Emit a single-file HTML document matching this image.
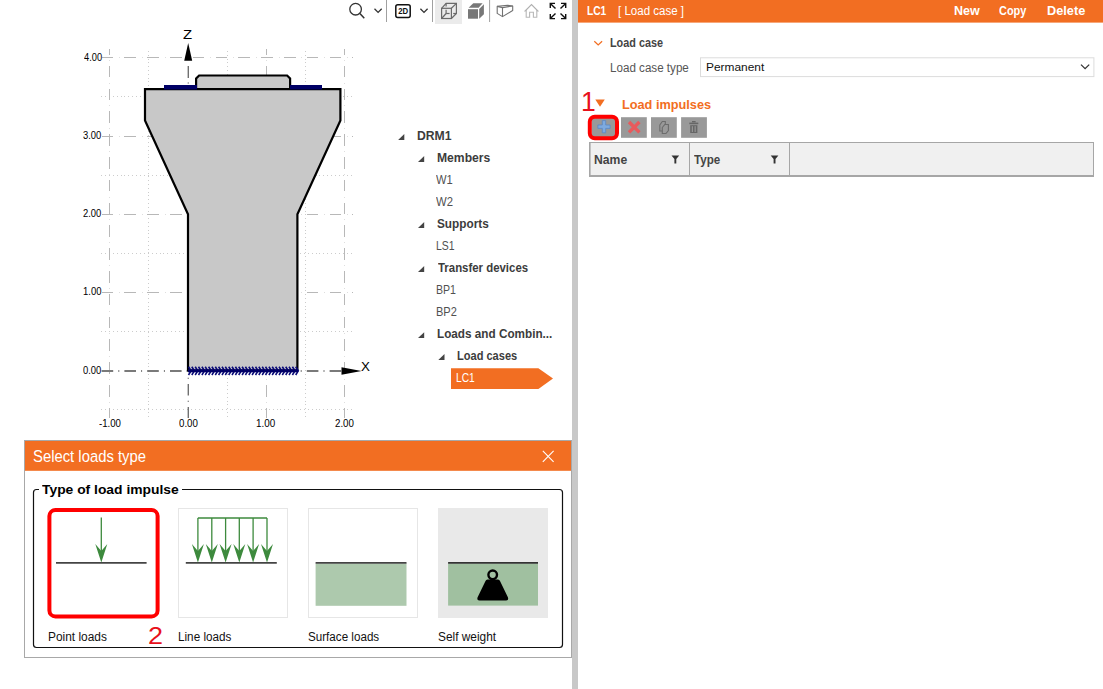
<!DOCTYPE html>
<html><head><meta charset="utf-8"><style>
html,body{margin:0;padding:0;background:#fff;}
body{width:1103px;height:689px;position:relative;overflow:hidden;font-family:'Liberation Sans',sans-serif;}
.g{position:absolute;left:0;top:0;}
.t{position:absolute;white-space:nowrap;transform-origin:0 0;}
</style></head><body>
<svg class="g" width="1103" height="689" viewBox="0 0 1103 689"><rect x="572" y="0" width="6" height="689" fill="#c8c8c8"/>
<rect x="578" y="0" width="525" height="22.6" fill="#f26e22"/>
<polyline points="594.3,41.2 598.2,45 602.1,41.2" fill="none" stroke="#f26e22" stroke-width="1.2"/>
<rect x="700.5" y="57.8" width="393.4" height="18.8" fill="#fff" stroke="#dcdcdc" stroke-width="1"/>
<polyline points="1081,64.6 1085.1,68.6 1089.2,64.6" fill="none" stroke="#333" stroke-width="1.3"/>
<polygon points="595.3,99.6 604.8,99.6 600,106.8" fill="#f26e22"/>
<rect x="591.7" y="117.2" width="25.8" height="20.6" fill="#999"/>
<rect x="621.0" y="117.2" width="25.8" height="20.6" fill="#999"/>
<rect x="651.0" y="117.2" width="25.8" height="20.6" fill="#999"/>
<rect x="681.1" y="117.2" width="25.8" height="20.6" fill="#999"/>
<path d="M602.3,120.6 h3.4 v4.4 h4.4 v3.4 h-4.4 v4.4 h-3.4 v-4.4 h-4.4 v-3.4 h4.4z" fill="#7eaae0" stroke="#5b88c4" stroke-width="0.8"/>
<g stroke="#e85a5c" stroke-width="3.4" stroke-linecap="butt"><line x1="629" y1="122" x2="639.4" y2="132.4"/><line x1="639.4" y1="122" x2="629" y2="132.4"/></g>
<g fill="none" stroke="#6c6c6c" stroke-width="1.1"><path d="M659.8,125 l2.5,-3.5 h3 v6 l-2.5,3.5 h-3z"/><path d="M662.3,127.5 l2.5,-3 h3.6 v6 l-2.5,3 h-3.6z" fill="#999"/></g>
<g fill="#666"><rect x="689.3" y="122.6" width="9" height="1.6"/><rect x="692" y="121" width="3.6" height="1.4"/><path d="M690.2,125.2 h7.2 v7.8 h-7.2z"/></g>
<g fill="#999"><rect x="691.8" y="126.2" width="1.1" height="5.8"/><rect x="694.6" y="126.2" width="1.1" height="5.8"/></g>
<rect x="589.8" y="116.8" width="27.2" height="21.5" rx="5" fill="none" stroke="#ff0000" stroke-width="4"/>
<rect x="589.5" y="142.5" width="504" height="33" fill="#f0f0f0" stroke="#a6a6a6" stroke-width="1"/>
<rect x="589" y="175" width="505" height="2" fill="#a6a6a6"/>
<rect x="589" y="142" width="1.6" height="35" fill="#a6a6a6"/>
<line x1="689.5" y1="143" x2="689.5" y2="175" stroke="#a6a6a6" stroke-width="1"/>
<line x1="789.5" y1="143" x2="789.5" y2="175" stroke="#a6a6a6" stroke-width="1"/>
<path d="M671.5,155.5 h7.7 l-2.9,3.4 v4.6 h-1.9 v-4.6z" fill="#333"/>
<path d="M770.7,155.5 h7.7 l-2.9,3.4 v4.6 h-1.9 v-4.6z" fill="#333"/><g shape-rendering="crispEdges"><line x1="148.5" y1="51" x2="148.5" y2="418" stroke="#cccccc" stroke-dasharray="1 2.8"/><line x1="227.5" y1="51" x2="227.5" y2="418" stroke="#cccccc" stroke-dasharray="1 2.8"/><line x1="305.5" y1="51" x2="305.5" y2="418" stroke="#cccccc" stroke-dasharray="1 2.8"/><line x1="101.0" y1="409.5" x2="352" y2="409.5" stroke="#cccccc" stroke-dasharray="1 2.9"/><line x1="101.0" y1="331.5" x2="352" y2="331.5" stroke="#cccccc" stroke-dasharray="1 2.9"/><line x1="101.0" y1="253.5" x2="352" y2="253.5" stroke="#cccccc" stroke-dasharray="1 2.9"/><line x1="101.0" y1="175.5" x2="352" y2="175.5" stroke="#cccccc" stroke-dasharray="1 2.9"/><line x1="101.0" y1="96.5" x2="352" y2="96.5" stroke="#cccccc" stroke-dasharray="1 2.9"/><line x1="109.5" y1="49" x2="109.5" y2="418" stroke="#b8b8b8" stroke-dasharray="11.6 11.2" stroke-dashoffset="6"/><line x1="109.5" y1="49" x2="109.5" y2="418" stroke="#dedede" stroke-dasharray="1 21.8" stroke-dashoffset="-10.8"/><line x1="266.5" y1="49" x2="266.5" y2="418" stroke="#b8b8b8" stroke-dasharray="11.6 11.2" stroke-dashoffset="6"/><line x1="266.5" y1="49" x2="266.5" y2="418" stroke="#dedede" stroke-dasharray="1 21.8" stroke-dashoffset="-10.8"/><line x1="344.5" y1="49" x2="344.5" y2="418" stroke="#b8b8b8" stroke-dasharray="11.6 11.2" stroke-dashoffset="6"/><line x1="344.5" y1="49" x2="344.5" y2="418" stroke="#dedede" stroke-dasharray="1 21.8" stroke-dashoffset="-10.8"/><line x1="101.6" y1="292.5" x2="353" y2="292.5" stroke="#b8b8b8" stroke-dasharray="11.6 11.2"/><line x1="101.6" y1="292.5" x2="353" y2="292.5" stroke="#dedede" stroke-dasharray="1 21.8" stroke-dashoffset="-17.3"/><line x1="101.6" y1="214.5" x2="353" y2="214.5" stroke="#b8b8b8" stroke-dasharray="11.6 11.2"/><line x1="101.6" y1="214.5" x2="353" y2="214.5" stroke="#dedede" stroke-dasharray="1 21.8" stroke-dashoffset="-17.3"/><line x1="101.6" y1="136.5" x2="353" y2="136.5" stroke="#b8b8b8" stroke-dasharray="11.6 11.2"/><line x1="101.6" y1="136.5" x2="353" y2="136.5" stroke="#dedede" stroke-dasharray="1 21.8" stroke-dashoffset="-17.3"/><line x1="101.6" y1="57.5" x2="353" y2="57.5" stroke="#b8b8b8" stroke-dasharray="11.6 11.2"/><line x1="101.6" y1="57.5" x2="353" y2="57.5" stroke="#dedede" stroke-dasharray="1 21.8" stroke-dashoffset="-17.3"/></g>
<line x1="101.6" y1="371" x2="342" y2="371" stroke="#7a7a7a" stroke-width="2" stroke-dasharray="11.6 5.1 1 5.1"/>
<line x1="188.3" y1="66" x2="188.3" y2="90" stroke="#707070" stroke-width="1.4" stroke-dasharray="12 4.6 1 5"/>
<line x1="188.3" y1="377.8" x2="188.3" y2="418" stroke="#707070" stroke-width="1.4" stroke-dasharray="1 5.2 11.6 5.2"/>
<path d="M196.1,89.2 L196.1,78.5 L199.1,75.5 L287.1,75.5 L290.1,78.5 L290.1,89.2" fill="#c8c8c8" stroke="#000" stroke-width="2.2"/>
<polygon points="145.0,89.2 340.4,89.2 340.4,120.4 297.4,214.2 297.4,370.5 188.0,370.5 188.0,214.2 145.0,120.4" fill="#c8c8c8" stroke="#000" stroke-width="2.2" stroke-linejoin="miter"/>
<rect x="164" y="85" width="33" height="4.5" fill="#000066"/>
<rect x="290" y="85" width="32" height="4.5" fill="#000066"/>
<path d="M188.5,366.8 L191.1,370.8 L188.5,375 M191.8,366.8 L194.4,370.8 L191.8,375 M195.2,366.8 L197.8,370.8 L195.2,375 M198.5,366.8 L201.1,370.8 L198.5,375 M201.9,366.8 L204.5,370.8 L201.9,375 M205.2,366.8 L207.8,370.8 L205.2,375 M208.6,366.8 L211.2,370.8 L208.6,375 M211.9,366.8 L214.5,370.8 L211.9,375 M215.3,366.8 L217.9,370.8 L215.3,375 M218.6,366.8 L221.2,370.8 L218.6,375 M222.0,366.8 L224.6,370.8 L222.0,375 M225.3,366.8 L227.9,370.8 L225.3,375 M228.7,366.8 L231.3,370.8 L228.7,375 M232.0,366.8 L234.6,370.8 L232.0,375 M235.4,366.8 L238.0,370.8 L235.4,375 M238.7,366.8 L241.3,370.8 L238.7,375 M242.1,366.8 L244.7,370.8 L242.1,375 M245.4,366.8 L248.0,370.8 L245.4,375 M248.8,366.8 L251.4,370.8 L248.8,375 M252.1,366.8 L254.7,370.8 L252.1,375 M255.5,366.8 L258.1,370.8 L255.5,375 M258.8,366.8 L261.4,370.8 L258.8,375 M262.2,366.8 L264.8,370.8 L262.2,375 M265.5,366.8 L268.1,370.8 L265.5,375 M268.9,366.8 L271.5,370.8 L268.9,375 M272.2,366.8 L274.9,370.8 L272.2,375 M275.6,366.8 L278.2,370.8 L275.6,375 M279.0,366.8 L281.6,370.8 L279.0,375 M282.3,366.8 L284.9,370.8 L282.3,375 M285.7,366.8 L288.3,370.8 L285.7,375 M289.0,366.8 L291.6,370.8 L289.0,375 M292.4,366.8 L295.0,370.8 L292.4,375 M295.7,366.8 L298.3,370.8 L295.7,375" fill="none" stroke="#0a0a78" stroke-width="1.6"/>
<rect x="188" y="369.3" width="110" height="3" fill="#000066"/>
<polygon points="188.2,43 184.2,60.8 192.2,60.8" fill="#000"/>
<polygon points="361.5,371 341.5,367.2 341.5,374.8" fill="#000"/><circle cx="355.6" cy="9.2" r="5.8" fill="none" stroke="#333" stroke-width="1.3"/>
<line x1="359.9" y1="13.4" x2="364.3" y2="18.2" stroke="#333" stroke-width="1.5"/>
<polyline points="374.5,8.8 378.1,12.4 381.7,8.8" fill="none" stroke="#333" stroke-width="1.3"/>
<line x1="386.5" y1="0" x2="386.5" y2="22" stroke="#a0a0a0" stroke-width="1"/>
<rect x="395.8" y="4.8" width="14.4" height="12.6" rx="2" fill="none" stroke="#111" stroke-width="1.5"/>
<text x="403.2" y="14.2" font-family="Liberation Sans" font-weight="bold" font-size="8.8" text-anchor="middle" fill="#111" textLength="10" lengthAdjust="spacingAndGlyphs">2D</text>
<polyline points="420.4,8.8 424,12.4 427.6,8.8" fill="none" stroke="#333" stroke-width="1.3"/>
<line x1="432.5" y1="0" x2="432.5" y2="22" stroke="#a0a0a0" stroke-width="1"/>
<rect x="435" y="0" width="27" height="24" fill="#ebebeb"/>
<g fill="none" stroke="#6a6a6a" stroke-width="1.2"><rect x="441.6" y="8.3" width="9.8" height="10.2"/><polyline points="441.6,8.3 446.1,3.4 456.4,3.4 456.4,13.5 451.4,18.5"/><line x1="451.4" y1="8.3" x2="456.4" y2="3.4"/><line x1="446.1" y1="3.4" x2="446.1" y2="6.6"/><line x1="446.1" y1="9.8" x2="446.1" y2="13.5"/><line x1="446.1" y1="13.5" x2="449.6" y2="13.5"/><line x1="453.2" y1="13.5" x2="456.4" y2="13.5"/><line x1="441.6" y1="18.5" x2="446.1" y2="13.5"/></g>
<g fill="#777"><rect x="468" y="9.2" width="10" height="9.5"/><polygon points="468.6,7.7 473.3,3.2 482.6,3.2 478.6,7.7"/><polygon points="479.2,8.9 483.9,4.2 483.9,14.2 479.2,18.7"/></g>
<line x1="489.6" y1="0" x2="489.6" y2="22" stroke="#a0a0a0" stroke-width="1"/>
<g fill="none" stroke="#727272" stroke-width="1.1" stroke-linejoin="round"><polygon points="497.2,6.4 497.2,13.4 502.5,16.6 512.7,10.5 512.7,6.0 507.5,5.2"/><polyline points="497.2,6.4 502.5,7.6 512.7,6.0"/><line x1="502.5" y1="7.6" x2="502.5" y2="16.6"/></g>
<polyline points="524.6,11.5 531.5,4.6 538.4,11.5" fill="none" stroke="#b0b0b0" stroke-width="1.1"/><polyline points="526.2,10 526.2,17.3 529.6,17.3 529.6,12.2 533.4,12.2 533.4,17.3 536.8,17.3 536.8,10" fill="none" stroke="#b8b8b8" stroke-width="1.1"/>
<g stroke="#111" stroke-width="1.4" fill="none"><polyline points="550.3,8 550.3,3.4 555,3.4"/><line x1="550.3" y1="3.4" x2="555.5" y2="8.4"/><polyline points="561,3.4 565.7,3.4 565.7,8"/><line x1="565.7" y1="3.4" x2="560.5" y2="8.4"/><polyline points="550.3,14 550.3,18.6 555,18.6"/><line x1="550.3" y1="18.6" x2="555.5" y2="13.6"/><polyline points="561,18.6 565.7,18.6 565.7,14"/><line x1="565.7" y1="18.6" x2="560.5" y2="13.6"/></g><polygon points="404.3,134.0 404.3,139.9 398.1,139.9" fill="#444"/>
<polygon points="424.2,156.1 424.2,162.0 418.0,162.0" fill="#444"/>
<polygon points="424.2,222.1 424.2,228.0 418.0,228.0" fill="#444"/>
<polygon points="424.2,266.1 424.2,272.0 418.0,272.0" fill="#444"/>
<polygon points="424.2,332.20000000000005 424.2,338.1 418.0,338.1" fill="#444"/>
<polygon points="444.5,354.0 444.5,359.9 438.3,359.9" fill="#444"/>
<polygon points="451,368.3 538.4,368.3 553,378.6 538.4,388.9 451,388.9" fill="#f26e22"/><rect x="24.5" y="440.5" width="547" height="217" fill="#fff" stroke="#a8a8a8" stroke-width="1"/>
<rect x="25" y="441" width="546" height="29.8" fill="#f26e22"/>
<g stroke="#fff" stroke-width="1.1"><line x1="542.8" y1="450.8" x2="553.6" y2="461.8"/><line x1="553.6" y1="450.8" x2="542.8" y2="461.8"/></g>
<path d="M39,489.5 H36.5 Q33.5,489.5 33.5,492.5 V644.5 Q33.5,647.5 36.5,647.5 H559.5 Q562.5,647.5 562.5,644.5 V492.5 Q562.5,489.5 559.5,489.5 H182" fill="none" stroke="#111" stroke-width="1.2"/>
<rect x="178.5" y="508.5" width="109" height="109" fill="#fff" stroke="#e6e6e6" stroke-width="1"/>
<rect x="308.5" y="508.5" width="109" height="109" fill="#fff" stroke="#e6e6e6" stroke-width="1"/>
<rect x="438" y="508" width="110" height="110" fill="#e9e9e9"/>
<line x1="56" y1="562.8" x2="146.6" y2="562.8" stroke="#444" stroke-width="1.8"/>
<line x1="101.3" y1="517.4" x2="101.3" y2="552" stroke="#3d8a3d" stroke-width="1.3"/><path d="M95.3,544 L101.3,562.5 L107.3,544 L101.3,551 Z" fill="#3d8a3d"/>
<line x1="185.8" y1="562.8" x2="276.8" y2="562.8" stroke="#444" stroke-width="1.8"/>
<line x1="197.9" y1="518" x2="267.0" y2="518" stroke="#3d8a3d" stroke-width="1.3"/>
<line x1="197.9" y1="518" x2="197.9" y2="552" stroke="#3d8a3d" stroke-width="1.3"/><path d="M191.9,544 L197.9,562.5 L203.9,544 L197.9,551 Z" fill="#3d8a3d"/>
<line x1="211.8" y1="518" x2="211.8" y2="552" stroke="#3d8a3d" stroke-width="1.3"/><path d="M205.8,544 L211.8,562.5 L217.8,544 L211.8,551 Z" fill="#3d8a3d"/>
<line x1="225.6" y1="518" x2="225.6" y2="552" stroke="#3d8a3d" stroke-width="1.3"/><path d="M219.6,544 L225.6,562.5 L231.6,544 L225.6,551 Z" fill="#3d8a3d"/>
<line x1="239.3" y1="518" x2="239.3" y2="552" stroke="#3d8a3d" stroke-width="1.3"/><path d="M233.3,544 L239.3,562.5 L245.3,544 L239.3,551 Z" fill="#3d8a3d"/>
<line x1="253.1" y1="518" x2="253.1" y2="552" stroke="#3d8a3d" stroke-width="1.3"/><path d="M247.1,544 L253.1,562.5 L259.1,544 L253.1,551 Z" fill="#3d8a3d"/>
<line x1="267.0" y1="518" x2="267.0" y2="552" stroke="#3d8a3d" stroke-width="1.3"/><path d="M261.0,544 L267.0,562.5 L273.0,544 L267.0,551 Z" fill="#3d8a3d"/>
<rect x="315.6" y="563.5" width="90.9" height="42.3" fill="#adc9ad"/>
<line x1="315.6" y1="562.8" x2="406.5" y2="562.8" stroke="#444" stroke-width="1.8"/>
<rect x="448.1" y="563.5" width="89.9" height="42.1" fill="#a0c0a0"/>
<line x1="448.1" y1="562.8" x2="538" y2="562.8" stroke="#333" stroke-width="1.8"/>
<circle cx="492.7" cy="574.8" r="4.3" fill="none" stroke="#000" stroke-width="2.4"/>
<path d="M487.5,579.5 H498 Q499.5,579.5 500,581 L508,597.5 Q508.8,600.5 506,600.5 H479.5 Q476.7,600.5 477.5,597.5 L485.5,581 Q486,579.5 487.5,579.5Z" fill="#000"/>
<rect x="49.4" y="510.1" width="108.2" height="106.3" rx="6" fill="none" stroke="#ff0000" stroke-width="4"/></svg>
<div class="t" style="left:587.36px;top:4.70px;font-size:12px;line-height:12px;font-weight:bold;color:#fff;transform:scaleX(0.8506);">LC1</div>
<div class="t" style="left:617.68px;top:4.70px;font-size:12px;line-height:12px;font-weight:normal;color:#fff;transform:scaleX(0.9606);">[ Load case ]</div>
<div class="t" style="left:953.72px;top:4.80px;font-size:12px;line-height:12px;font-weight:bold;color:#fff;transform:scaleX(1.0417);">New</div>
<div class="t" style="left:999.34px;top:4.80px;font-size:12px;line-height:12px;font-weight:bold;color:#fff;transform:scaleX(0.9119);">Copy</div>
<div class="t" style="left:1046.80px;top:4.80px;font-size:12px;line-height:12px;font-weight:bold;color:#fff;transform:scaleX(1.0629);">Delete</div>
<div class="t" style="left:416.97px;top:129.90px;font-size:12.5px;line-height:12.5px;font-weight:bold;color:#3c3c3c;transform:scaleX(0.9752);">DRM1</div>
<div class="t" style="left:436.97px;top:151.80px;font-size:12.5px;line-height:12.5px;font-weight:bold;color:#3c3c3c;transform:scaleX(0.9712);">Members</div>
<div class="t" style="left:436.40px;top:173.70px;font-size:12.5px;line-height:12.5px;font-weight:normal;color:#505050;transform:scaleX(0.8932);">W1</div>
<div class="t" style="left:436.40px;top:195.60px;font-size:12.5px;line-height:12.5px;font-weight:normal;color:#505050;transform:scaleX(0.9041);">W2</div>
<div class="t" style="left:436.76px;top:217.60px;font-size:12.5px;line-height:12.5px;font-weight:bold;color:#3c3c3c;transform:scaleX(0.9438);">Supports</div>
<div class="t" style="left:435.57px;top:239.60px;font-size:12.5px;line-height:12.5px;font-weight:normal;color:#505050;transform:scaleX(0.8337);">LS1</div>
<div class="t" style="left:437.70px;top:261.70px;font-size:12.5px;line-height:12.5px;font-weight:bold;color:#3c3c3c;transform:scaleX(0.9130);">Transfer devices</div>
<div class="t" style="left:435.55px;top:283.80px;font-size:12.5px;line-height:12.5px;font-weight:normal;color:#505050;transform:scaleX(0.8455);">BP1</div>
<div class="t" style="left:435.52px;top:305.90px;font-size:12.5px;line-height:12.5px;font-weight:normal;color:#505050;transform:scaleX(0.8818);">BP2</div>
<div class="t" style="left:436.90px;top:328.10px;font-size:12.5px;line-height:12.5px;font-weight:bold;color:#3c3c3c;transform:scaleX(0.9386);">Loads and Combin...</div>
<div class="t" style="left:456.94px;top:349.90px;font-size:12.5px;line-height:12.5px;font-weight:bold;color:#3c3c3c;transform:scaleX(0.8839);">Load cases</div>
<div class="t" style="left:455.58px;top:372.10px;font-size:12.5px;line-height:12.5px;font-weight:normal;color:#fff;transform:scaleX(0.8188);">LC1</div>
<div class="t" style="left:609.85px;top:36.80px;font-size:12.5px;line-height:12.5px;font-weight:bold;color:#444;transform:scaleX(0.8667);">Load case</div>
<div class="t" style="left:609.57px;top:62.00px;font-size:12.5px;line-height:12.5px;font-weight:normal;color:#555;transform:scaleX(0.9297);">Load case type</div>
<div class="t" style="left:705.59px;top:61.90px;font-size:11.8px;line-height:11.8px;font-weight:normal;color:#111;transform:scaleX(1.0097);">Permanent</div>
<div class="t" style="left:622.14px;top:98.50px;font-size:12.5px;line-height:12.5px;font-weight:bold;color:#f26e22;transform:scaleX(1.0180);">Load impulses</div>
<div class="t" style="left:593.87px;top:154.10px;font-size:12.5px;line-height:12.5px;font-weight:bold;color:#444;transform:scaleX(0.9740);">Name</div>
<div class="t" style="left:694.20px;top:154.30px;font-size:12.5px;line-height:12.5px;font-weight:bold;color:#444;transform:scaleX(0.9297);">Type</div>
<div class="t" style="left:581.03px;top:89.10px;font-size:26.87px;line-height:26.87px;font-weight:normal;color:#e8101a;transform:scaleX(0.9872);">1</div>
<div class="t" style="left:32.79px;top:449.00px;font-size:15.68px;line-height:15.68px;font-weight:normal;color:#fff;transform:scaleX(0.9466);">Select loads type</div>
<div class="t" style="left:41.50px;top:483.50px;font-size:12.8px;line-height:12.8px;font-weight:bold;color:#000;transform:scaleX(1.0823);">Type of load impulse</div>
<div class="t" style="left:47.65px;top:631.00px;font-size:12.5px;line-height:12.5px;font-weight:normal;color:#111;transform:scaleX(0.9521);">Point loads</div>
<div class="t" style="left:177.86px;top:631.00px;font-size:12.5px;line-height:12.5px;font-weight:normal;color:#111;transform:scaleX(0.9369);">Line loads</div>
<div class="t" style="left:307.53px;top:631.00px;font-size:12.5px;line-height:12.5px;font-weight:normal;color:#111;transform:scaleX(0.9311);">Surface loads</div>
<div class="t" style="left:438.02px;top:631.00px;font-size:12.5px;line-height:12.5px;font-weight:normal;color:#111;transform:scaleX(0.9504);">Self weight</div>
<div class="t" style="left:148.17px;top:624.50px;font-size:23.65px;line-height:23.65px;font-weight:normal;color:#e8101a;transform:scaleX(1.1442);">2</div>
<div class="t" style="left:83.57px;top:52.70px;font-size:10px;line-height:10px;font-weight:normal;color:#000;transform:scaleX(0.9280);">4.00</div>
<div class="t" style="left:83.33px;top:130.80px;font-size:10px;line-height:10px;font-weight:normal;color:#000;transform:scaleX(0.9405);">3.00</div>
<div class="t" style="left:83.33px;top:208.90px;font-size:10px;line-height:10px;font-weight:normal;color:#000;transform:scaleX(0.9405);">2.00</div>
<div class="t" style="left:83.08px;top:287.10px;font-size:10px;line-height:10px;font-weight:normal;color:#000;transform:scaleX(0.9534);">1.00</div>
<div class="t" style="left:83.33px;top:365.80px;font-size:10px;line-height:10px;font-weight:normal;color:#000;transform:scaleX(0.9405);">0.00</div>
<div class="t" style="left:98.52px;top:419.00px;font-size:10px;line-height:10px;font-weight:normal;color:#000;transform:scaleX(0.9636);">-1.00</div>
<div class="t" style="left:178.51px;top:419.00px;font-size:10px;line-height:10px;font-weight:normal;color:#000;transform:scaleX(0.9730);">0.00</div>
<div class="t" style="left:256.46px;top:419.00px;font-size:10px;line-height:10px;font-weight:normal;color:#000;transform:scaleX(0.9863);">1.00</div>
<div class="t" style="left:334.91px;top:419.00px;font-size:10px;line-height:10px;font-weight:normal;color:#000;transform:scaleX(0.9730);">2.00</div>
<div class="t" style="left:183.43px;top:27.90px;font-size:13.03px;line-height:13.03px;font-weight:normal;color:#000;transform:scaleX(1.1429);">Z</div>
<div class="t" style="left:360.54px;top:360.00px;font-size:13.03px;line-height:13.03px;font-weight:normal;color:#000;transform:scaleX(1.0250);">X</div>
</body></html>
